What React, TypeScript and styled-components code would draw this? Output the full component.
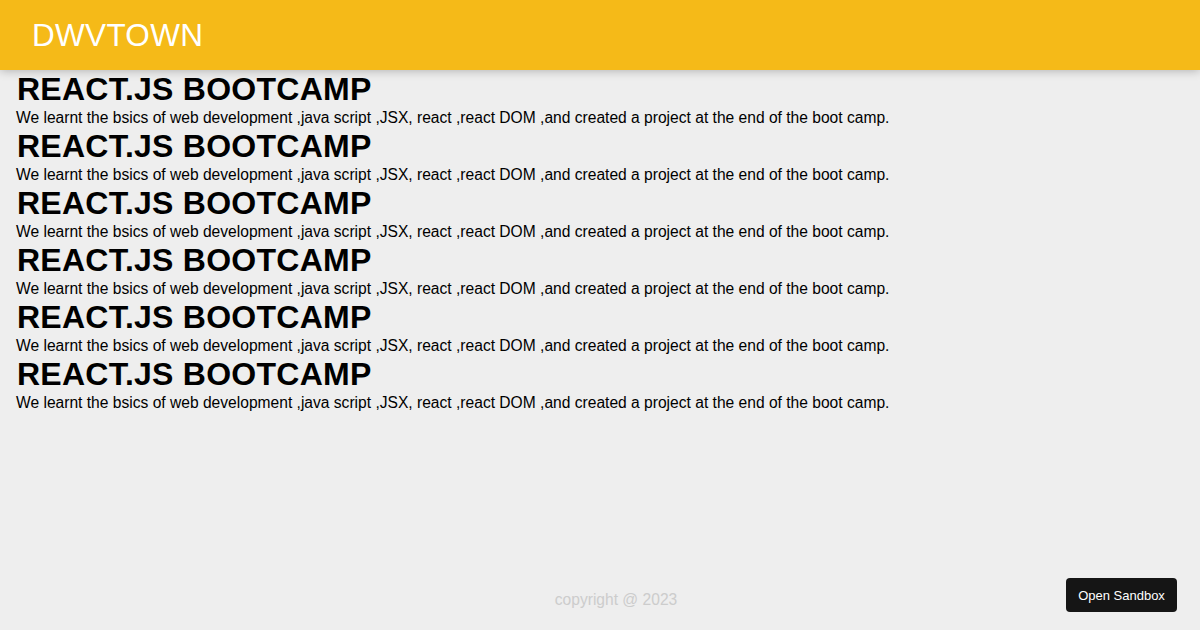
import styled, { createGlobalStyle } from 'styled-components'

const GlobalStyle = createGlobalStyle`
  html, body {
    margin: 0;
    padding: 0;
    background-color: #eeeeee;
    font-family: "Liberation Sans", Arial, sans-serif;
  }
`

const courses = Array.from({ length: 6 }, () => ({
  title: 'REACT.JS BOOTCAMP',
  text: 'We learnt the bsics of web development ,java script ,JSX, react ,react DOM ,and created a project at the end of the boot camp.',
}))

const Note = ({ title, text }: { title: string; text: string }) => {
  return (
    <Card>
      <Title>{title}</Title>
      <Text>{text}</Text>
    </Card>
  )
}

export default function App() {
  return (
    <Page>
      <GlobalStyle />
      <Header>
        <Logo>DWVTOWN</Logo>
      </Header>
      <Main>
        {courses.map((c, i) => (
          <Note key={i} title={c.title} text={c.text} />
        ))}
      </Main>
      <Footer>
        <Copy>copyright @ 2023</Copy>
      </Footer>
      <SandboxButton>Open Sandbox</SandboxButton>
    </Page>
  )
}

const Page = styled.div`
  height: 630px;
  display: flex;
  flex-direction: column;
  position: relative;
  overflow: hidden;
`

const Header = styled.header`
  height: 70px;
  background-color: #f5ba18;
  box-shadow: 0 0 10px rgba(0, 0, 0, 0.3);
  display: flex;
  align-items: center;
  padding: 0 32px;
  position: relative;
  z-index: 1;
`

const Logo = styled.h1`
  margin: 0;
  color: #ffffff;
  font-family: "Liberation Sans", Arial, sans-serif;
  font-weight: 200;
  font-size: 31.5px;
  letter-spacing: 0.3px;
`

const Main = styled.main`
  flex: 1;
  padding: 0 16px;
`

const Card = styled.div`
  display: flex;
  flex-direction: column;
`

const Title = styled.h1`
  margin: 0;
  font-size: 32px;
  line-height: 38px;
  font-weight: 700;
  letter-spacing: 0.25px;
  color: #000;
  padding-left: 1px;
`

const Text = styled.p`
  margin: 0;
  font-size: 15.6px;
  line-height: 19px;
  color: #000;
`

const Footer = styled.footer`
  height: 58px;
  display: flex;
  justify-content: center;
  align-items: flex-start;
  padding-left: 32px;
`

const Copy = styled.p`
  margin: 0;
  padding-top: 19px;
  font-size: 15.6px;
  line-height: 18px;
  color: #cccccc;
`

const SandboxButton = styled.button`
  position: absolute;
  right: 23px;
  bottom: 18px;
  width: 111px;
  height: 34px;
  border: none;
  border-radius: 4px;
  background-color: #151515;
  color: #ffffff;
  font-family: "Liberation Sans", Arial, sans-serif;
  font-size: 13px;
  cursor: pointer;
`
